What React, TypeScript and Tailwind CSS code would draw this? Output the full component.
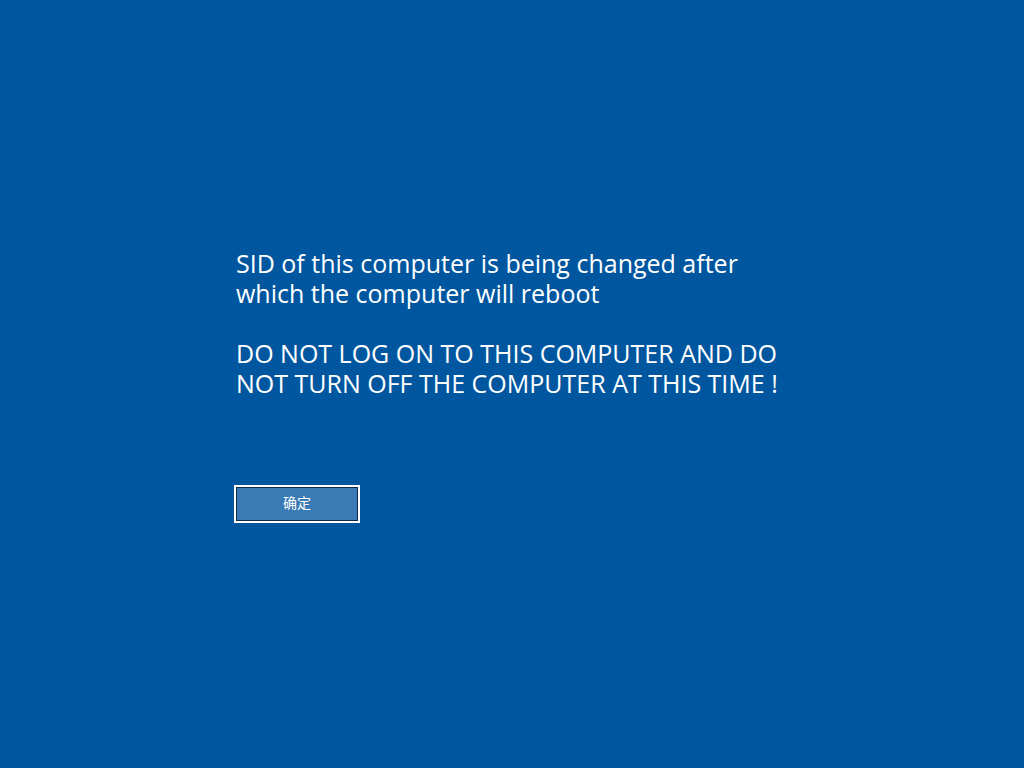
export default function App() {
  return (
    <div
      className="w-[1024px] h-[768px] bg-[#00579f] text-white overflow-hidden"
      style={{ fontFamily: '"Open Sans", "Noto Sans CJK SC", sans-serif' }}
    >
      <div className="pl-[236px] pt-[248px] flex flex-col">
        <p className="text-[25px] leading-[30px]">
          SID of this computer is being changed after
          <br />
          which the computer will reboot
        </p>
        <p className="mt-[30px] text-[25px] leading-[30px]">
          DO NOT LOG ON TO THIS COMPUTER AND DO
          <br />
          NOT TURN OFF THE COMPUTER AT THIS TIME !
        </p>
        <button className="mt-[87px] -ml-[2px] w-[126px] h-[38px] pb-[3px] border-2 border-white bg-[#3a7ab5] text-[14px] text-white outline outline-1 -outline-offset-[3px] outline-[#0d2a47] flex items-center justify-center">
          确定
        </button>
      </div>
    </div>
  );
}
